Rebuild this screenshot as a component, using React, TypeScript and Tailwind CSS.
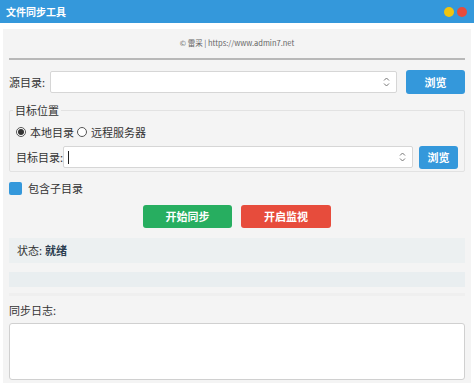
import React from 'react';

const FONT = '"Noto Sans CJK SC", "Noto Sans", "Liberation Sans", sans-serif';

function Spinner() {
  return (
    <svg width="7" height="12" viewBox="0 0 7 12" fill="none" stroke="#777" strokeWidth="1">
      <path d="M1 4.5L3.5 2L6 4.5" />
      <path d="M1 7.5L3.5 10L6 7.5" />
    </svg>
  );
}

function Field({ cursor }: { cursor?: boolean }) {
  return (
    <div className="flex-1 h-full bg-white border border-[#d6d6d6] rounded-[2px] flex items-center pl-[4px] pr-[6px]">
      <div className="flex-1">
        {cursor && <span className="block w-px h-[13px] bg-[#222]" />}
      </div>
      <Spinner />
    </div>
  );
}

export default function App() {
  return (
    <div className="w-[474px] h-[387px] bg-white flex flex-col" style={{ fontFamily: FONT }}>
      {/* 标题栏 */}
      <div className="h-[23px] bg-[#3498db] flex items-center justify-between pl-[6px] pr-[7px]">
        <span className="text-white text-[10px] font-bold">文件同步工具</span>
        <div className="flex gap-[3px]">
          <span className="w-[10px] h-[10px] rounded-full bg-[#f1c40f]" />
          <span className="w-[10px] h-[10px] rounded-full bg-[#e74c3c]" />
        </div>
      </div>

      <div className="mx-[3px] mt-[6px] h-[354px] bg-[#f4f4f4] px-[6px] text-[#333]">
        <div className="h-[28px] flex items-center justify-center text-[7.5px] text-[#666]">
          © 雷采 | https://www.admin7.net
        </div>
        <div className="h-[2px] bg-[#b8b8b8] mt-[1px]" />

        {/* 源目录 */}
        <div className="flex items-center mt-[10px] h-[24px]">
          <span className="w-[41px] shrink-0 whitespace-nowrap text-[11px]">源目录:</span>
          <div className="h-[22px] flex-1 flex">
            <Field />
          </div>
          <button className="ml-[9px] w-[59px] h-[24px] shrink-0 bg-[#3498db] text-white text-[11px] font-bold rounded-[3px]">
            浏览
          </button>
        </div>

        {/* 目标位置 */}
        <div className="relative mt-[16px] border border-[#e2e2e2] rounded-[2px] h-[62px] px-[6px] pt-[14px]">
          <span className="absolute left-[3px] top-[-8px] bg-[#f4f4f4] px-[2px] text-[11px] leading-[15px]">
            目标位置
          </span>
          <div className="flex items-center text-[11px] h-[14px] whitespace-nowrap">
            <span className="w-[10px] h-[10px] rounded-full border border-[#555] flex items-center justify-center bg-white">
              <span className="w-[6px] h-[6px] rounded-full bg-[#333]" />
            </span>
            <span className="ml-[4px]">本地目录</span>
            <span className="ml-[3px] w-[10px] h-[10px] rounded-full border border-[#555] bg-white" />
            <span className="ml-[4px]">远程服务器</span>
          </div>
          <div className="flex items-center mt-[6px] h-[24px]">
            <span className="w-[47px] shrink-0 whitespace-nowrap text-[11px]">目标目录:</span>
            <div className="h-[22px] flex-1 flex">
              <Field cursor />
            </div>
            <button className="ml-[6px] w-[39px] h-[23px] shrink-0 bg-[#3498db] text-white text-[11px] font-bold rounded-[3px]">
              浏览
            </button>
          </div>
        </div>

        {/* 包含子目录 */}
        <div className="flex items-center mt-[10px] h-[13px]">
          <span className="w-[13px] h-[13px] rounded-[2px] bg-[#3498db]" />
          <span className="ml-[6px] text-[11px]">包含子目录</span>
        </div>

        {/* 操作按钮 */}
        <div className="flex justify-center gap-[9px] mt-[10px]">
          <button className="w-[89px] h-[23px] bg-[#27ae60] text-white text-[11px] font-bold rounded-[3px]">
            开始同步
          </button>
          <button className="w-[90px] h-[23px] bg-[#e74c3c] text-white text-[11px] font-bold rounded-[3px]">
            开启监视
          </button>
        </div>

        {/* 状态 */}
        <div className="mt-[10px] h-[25px] bg-[#ecf0f1] flex items-center px-[8px] text-[11px]">
          <span>状态:</span>
          <span className="ml-[3px] font-bold text-[#2c3e50]">就绪</span>
        </div>
        <div className="mt-[9px] h-[15px] bg-[#e9eef0]" />
        <div className="mt-[6px] h-[3px] bg-[#efefef]" />

        {/* 日志 */}
        <div className="mt-[7px] text-[11px] h-[14px] leading-[14px]">同步日志:</div>
        <div className="mt-[6px] h-[57px] bg-white border border-[#d0d0d0] rounded-[3px]" />
      </div>
    </div>
  );
}
